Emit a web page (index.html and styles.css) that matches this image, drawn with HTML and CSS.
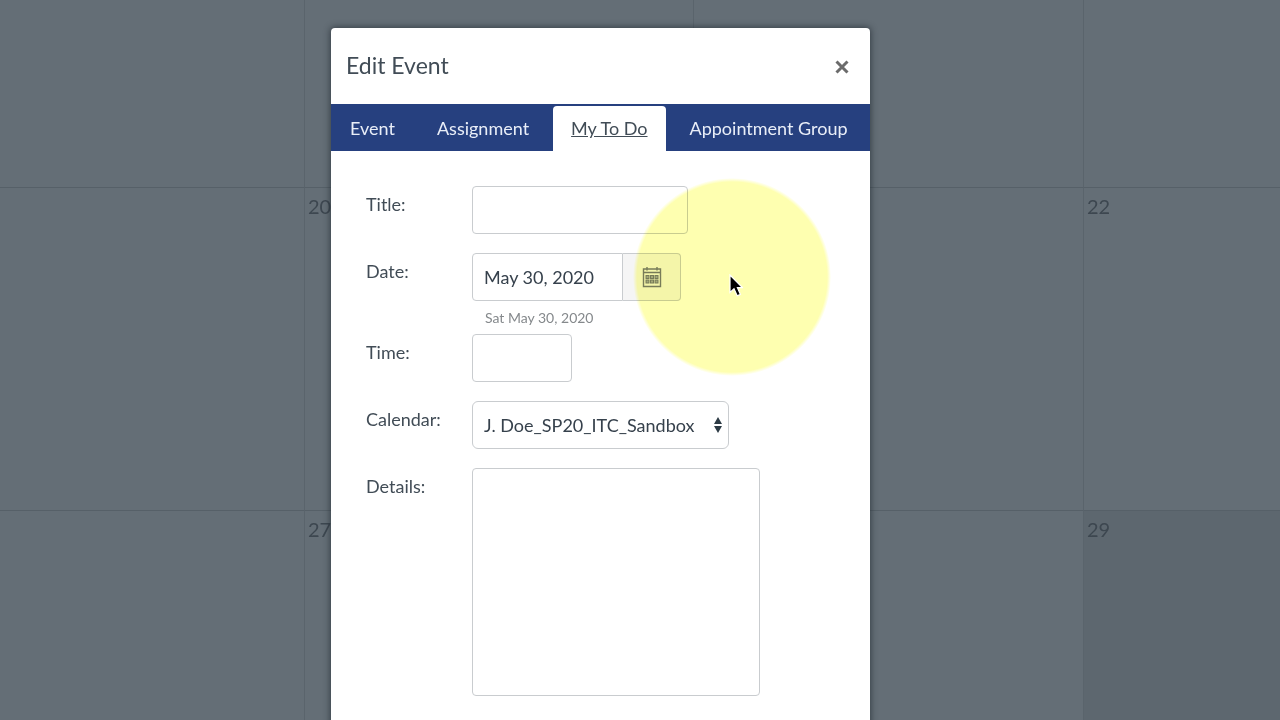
FILE: index.html
```html
<!DOCTYPE html>
<html lang="en">
<head>
<meta charset="utf-8">
<title>Edit Event</title>
<link rel="stylesheet" href="styles.css">
</head>
<body>
<div class="calendar" aria-hidden="true">
  <div class="day"></div><div class="day"></div><div class="day"></div><div class="day"></div>
  <div class="day"></div><div class="day">20</div><div class="day">21</div><div class="day">22</div>
  <div class="day"></div><div class="day">27</div><div class="day">28</div><div class="day today">29</div>
</div>

<div class="overlay">
  <section class="dialog" role="dialog" aria-labelledby="dialog-title">
    <header class="dialog-header">
      <h1 class="dialog-title" id="dialog-title">Edit Event</h1>
      <button class="close" type="button" aria-label="Close">
        <svg width="14" height="14" viewBox="0 0 14 14"><path d="M1.5 1.5l11 11M12.5 1.5l-11 11" stroke="#6b6b6b" stroke-width="3"/></svg>
      </button>
    </header>
    <nav class="tabs">
      <a class="tab" href="#event">Event</a>
      <a class="tab" href="#assignment">Assignment</a>
      <a class="tab tab-active" href="#todo">My To Do</a>
      <a class="tab" href="#appointment">Appointment Group</a>
    </nav>
    <form class="form">
      <label class="label" for="title">Title:</label>
      <input class="control title-input" id="title" type="text">

      <label class="label" for="date">Date:</label>
      <div class="date-field">
        <div class="date-group">
          <input class="control date-input" id="date" type="text" value="May 30, 2020">
          <button class="date-button" type="button" aria-label="Choose a date">
            <svg width="20" height="22" viewBox="0 0 20 22" fill="none" stroke="#777b7f" stroke-width="1.4">
              <path d="M1.5 3h17v17.5h-17zM1.5 6.5h17M5 1v3.5M15 1v3.5"/>
              <g fill="#a5a9ad" stroke-width="1">
                <rect x="4" y="9.5" width="3" height="3"/><rect x="8.5" y="9.5" width="3" height="3"/><rect x="13" y="9.5" width="3" height="3"/>
                <rect x="4" y="14" width="3" height="3"/><rect x="8.5" y="14" width="3" height="3"/><rect x="13" y="14" width="3" height="3"/>
              </g>
            </svg>
          </button>
        </div>
        <p class="date-hint">Sat May 30, 2020</p>
      </div>

      <label class="label" for="time">Time:</label>
      <input class="control time-input" id="time" type="text">

      <label class="label" for="calendar">Calendar:</label>
      <div class="select-field">
        <select class="control select" id="calendar"><option>J. Doe_SP20_ITC_Sandbox</option></select>
        <svg class="select-arrows" width="8" height="16" viewBox="0 0 8 16" fill="#2d3b45"><path d="M4 0l4 7H0zM4 16l4-7H0z"/></svg>
      </div>

      <label class="label" for="details">Details:</label>
      <textarea class="control details" id="details"></textarea>
    </form>
  </section>
</div>

<div class="spotlight"></div>
<svg class="pointer" width="14" height="24" viewBox="0 0 14 24"><path d="M1 1v17.5l4-3.7 3.2 7 3.2-1.4-3-6.8h5z" fill="#000" stroke="#fff" stroke-width="1.2"/></svg>
</body>
</html>
```
FILE: styles.css
```css
* { box-sizing: border-box; }

body {
  margin: 0;
  height: 100vh;
  overflow: hidden;
  position: relative;
  background: #646e76;
  color: #414c56;
  font: 18px/24px Lato, "Open Sans", sans-serif;
}

.calendar {
  height: 100%;
  display: grid;
  grid-template-columns: 305fr 389fr 390fr 196fr;
  grid-template-rows: 188fr 323fr 209fr;
}

.day {
  padding: 6px 3px;
  border-right: 1px solid #5a646c;
  border-bottom: 1px solid #566068;
  color: #3d4750;
  font-size: 20px;
}

.day:nth-child(4n) { border-right: 0; }
.day:nth-child(n+9) { border-bottom: 0; }
.today { background: #5d676f; }

.overlay {
  position: absolute;
  inset: 0;
  display: flex;
  justify-content: center;
  padding: 28px 79px 0 0;
  overflow: hidden;
}

.dialog {
  width: 100%;
  max-width: 539px;
  min-height: 100%;
  height: max-content;
  padding-bottom: 40px;
  background: #fff;
  border-radius: 4px;
  box-shadow: 0 0 6px 1px rgba(30, 38, 46, 0.65);
}

.dialog-header {
  display: flex;
  align-items: center;
  justify-content: space-between;
  height: 76px;
  padding: 0 20px 2px 15px;
}

.dialog-title {
  margin: 0;
  font-size: 23px;
  font-weight: 400;
  line-height: 32px;
}

.close {
  display: flex;
  padding: 4px 1px 0;
  border: 0;
  background: none;
}

.tabs {
  display: flex;
  gap: 6px;
  padding: 2px 0 0 1px;
  background: #26407f;
  white-space: nowrap;
}

.tab {
  padding: 10px 18px 11px;
  border-radius: 4px 4px 0 0;
  color: #e9eef8;
  text-decoration: none;
}

.tab-active {
  background: #fff;
  color: #414c56;
  text-decoration: underline;
}

.form {
  display: grid;
  grid-template-columns: 106px 1fr;
  row-gap: 19px;
  justify-items: start;
  align-items: start;
  padding: 35px;
}

.label { padding-top: 6px; }

.control {
  height: 48px;
  margin: 0;
  padding: 0 11px;
  border: 1px solid #c9cccf;
  border-radius: 4px;
  background: #fff;
  color: #36414c;
  font: inherit;
  text-rendering: optimizeLegibility;
}

.title-input { width: 216px; }
.time-input { width: 100px; }

.date-field { margin-bottom: -11px; }
.date-group { display: flex; }

.date-input {
  width: 151px;
  border-radius: 4px 0 0 4px;
}

.date-button {
  display: flex;
  align-items: center;
  justify-content: center;
  width: 58px;
  padding: 0;
  border: 1px solid #c9cccf;
  border-left: 0;
  border-radius: 0 4px 4px 0;
  background: #f5f5f5;
}

.date-hint {
  margin: 8px 0 0 13px;
  color: #85898c;
  font-size: 14px;
  line-height: 17px;
}

.select-field { position: relative; }

.select {
  display: block;
  width: 257px;
  border-radius: 6px;
  appearance: none;
}

.select-arrows {
  position: absolute;
  top: 16px;
  right: 7px;
  pointer-events: none;
}

.details {
  display: block;
  width: 288px;
  height: 228px;
  padding: 11px;
  resize: none;
}

.spotlight {
  position: absolute;
  top: 178px;
  left: 633px;
  width: 198px;
  height: 198px;
  border-radius: 50%;
  background: radial-gradient(closest-side, #feffb0 96%, #fff 100%);
  mix-blend-mode: multiply;
  pointer-events: none;
}

.pointer {
  position: absolute;
  top: 274px;
  left: 729px;
  pointer-events: none;
}
```
